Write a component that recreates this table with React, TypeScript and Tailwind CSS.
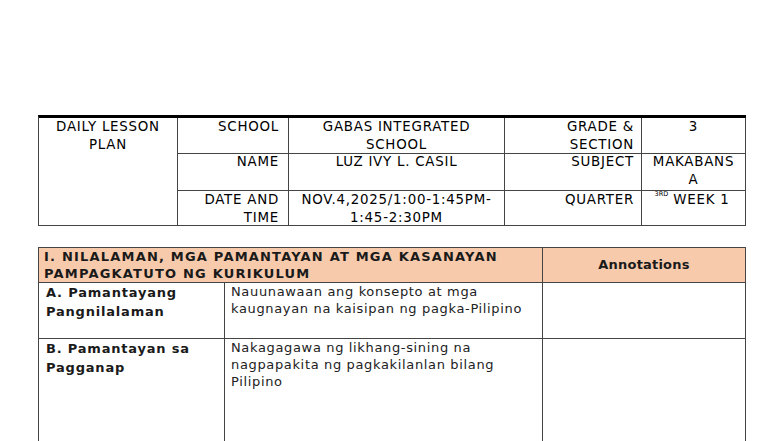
export default function App() {
  const line = "border-[#444]";
  return (
    <div className="w-[784px] h-[441px] bg-white overflow-hidden font-['DejaVu_Sans',sans-serif] text-black">
      <div className="pt-[115px] pl-[38px]">
        {/* Top info table */}
        <div
          className={`grid grid-cols-[139px_111px_216px_137px_104px] grid-rows-[36px_37px_35px] w-[708px] border-t-[3px] border-t-black border-l ${line} text-[13.4px] leading-[18px] tracking-[0.75px]`}
        >
          <div className={`row-span-3 border-r border-b ${line} text-center`}>
            DAILY LESSON
            <br />
            PLAN
          </div>
          <div className={`border-r border-b ${line} text-right pr-[9px]`}>SCHOOL</div>
          <div className={`border-r border-b ${line} text-center`}>
            GABAS INTEGRATED
            <br />
            SCHOOL
          </div>
          <div className={`border-r border-b ${line} text-right pr-[7px]`}>
            GRADE &amp;
            <br />
            SECTION
          </div>
          <div className={`border-r border-b ${line} text-center`}>3</div>

          <div className={`border-r border-b ${line} text-right pr-[9px] -mt-px`}>NAME</div>
          <div className={`border-r border-b ${line} text-center -mt-px`}>LUZ IVY L. CASIL</div>
          <div className={`border-r border-b ${line} text-right pr-[7px] -mt-px`}>SUBJECT</div>
          <div className={`border-r border-b ${line} text-center -mt-px`}>
            MAKABANS
            <br />
            A
          </div>

          <div className={`border-r border-b ${line} text-right pr-[9px]`}>
            DATE AND
            <br />
            TIME
          </div>
          <div className={`border-r border-b ${line} text-center whitespace-nowrap`}>
            NOV.4,2025/1:00-1:45PM-
            <br />
            1:45-2:30PM
          </div>
          <div className={`border-r border-b ${line} text-right pr-[7px]`}>QUARTER</div>
          <div className={`border-r border-b ${line} text-center whitespace-nowrap pr-[3px]`}>
            <sup className="text-[6.5px] tracking-normal align-[5px]">3RD</sup> WEEK 1
          </div>
        </div>

        {/* Curriculum table */}
        <div className={`mt-[21px] w-[708px] border-t border-l ${line}`}>
          <div className="grid grid-cols-[504px_203px] h-[35px] bg-[#f7caac]">
            <div
              className={`border-r border-b ${line} pl-[5px] text-[13px] leading-[17px] font-bold tracking-[1.2px] text-[#1a1a1a]`}
            >
              I. NILALAMAN, MGA PAMANTAYAN AT MGA KASANAYAN
              <br />
              PAMPAGKATUTO NG KURIKULUM
            </div>
            <div
              className={`border-r border-b ${line} flex items-center justify-center text-[13px] font-bold tracking-[0.2px] text-[#1a1a1a]`}
            >
              Annotations
            </div>
          </div>

          <div className="grid grid-cols-[186px_318px_203px] grid-rows-[56px_120px]">
            <div
              className={`border-r border-b ${line} pl-[7px] text-[13px] leading-[19px] font-bold tracking-[0.8px] text-[#1a1a1a]`}
            >
              A. Pamantayang
              <br />
              Pangnilalaman
            </div>
            <div
              className={`border-r border-b ${line} pl-[6px] text-[13px] leading-[17px] tracking-[0.65px] text-[#222]`}
            >
              Nauunawaan ang konsepto at mga
              <br />
              kaugnayan na kaisipan ng pagka-Pilipino
            </div>
            <div className={`border-r border-b ${line}`} />

            <div
              className={`border-r border-b ${line} pl-[7px] text-[13px] leading-[19px] font-bold tracking-[0.8px] text-[#1a1a1a]`}
            >
              B. Pamantayan sa
              <br />
              Pagganap
            </div>
            <div
              className={`border-r border-b ${line} pl-[6px] text-[13px] leading-[17px] tracking-[0.65px] text-[#222]`}
            >
              Nakagagawa ng likhang-sining na
              <br />
              nagpapakita ng pagkakilanlan bilang
              <br />
              Pilipino
            </div>
            <div className={`border-r border-b ${line}`} />
          </div>
        </div>
      </div>
    </div>
  );
}
